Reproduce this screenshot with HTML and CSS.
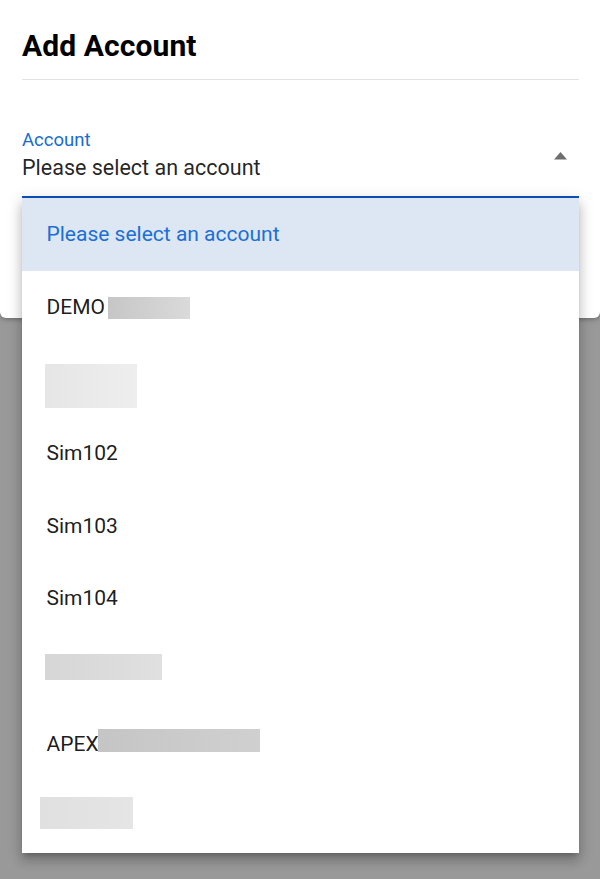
FILE: index.html
```html
<!DOCTYPE html>
<html lang="en">
<head>
<meta charset="utf-8">
<title>Add Account</title>
<link rel="stylesheet" href="styles.css">
</head>
<body>
<div class="page">
  <section class="dialog">
    <h1 class="title">Add Account</h1>
    <hr class="divider">
    <div class="field">
      <div class="field-text">
        <label class="field-label">Account</label>
        <div class="field-value">Please select an account</div>
      </div>
      <svg class="arrow" width="13" height="8" viewBox="0 0 13 8" aria-hidden="true"><polygon points="6.5,0 13,7.5 0,7.5" fill="#6e6e6e"/></svg>
    </div>
  </section>

  <ul class="menu">
    <li class="item selected">Please select an account</li>
    <li class="item">DEMO<span class="redact r-demo"></span></li>
    <li class="item top"><span class="redact r-two"></span></li>
    <li class="item">Sim102</li>
    <li class="item">Sim103</li>
    <li class="item">Sim104</li>
    <li class="item top"><span class="redact r-six"></span></li>
    <li class="item">APEX<span class="redact r-apex"></span></li>
    <li class="item top"><span class="redact r-eight"></span></li>
  </ul>
</div>
</body>
</html>
```

FILE: styles.css
```css
html, body {
  margin: 0;
  padding: 0;
}

body {
  background: #999999;
  font-family: Roboto, "Liberation Sans", Arial, sans-serif;
  color: rgba(0, 0, 0, 0.87);
}

.page {
  position: relative;
  width: 600px;
  height: 879px;
  overflow: hidden;
}

.dialog {
  background: #ffffff;
  height: 318px;
  box-sizing: border-box;
  padding: 28px 21px 0 22px;
  border-radius: 0 0 6px 6px;
  box-shadow: 0 2px 4px rgba(0, 0, 0, 0.25);
}

.title {
  margin: 0;
  font-size: 30px;
  line-height: 36px;
  font-weight: 700;
  color: #000000;
  letter-spacing: 0.1px;
}

.divider {
  margin: 15px 0 0;
  border: 0;
  height: 1px;
  background: #e2e2e2;
}

.field {
  margin-top: 49px;
  display: flex;
  align-items: center;
  padding-bottom: 15px;
  border-bottom: 3px solid #0e52be;
}

.field-text {
  flex: 1;
  display: flex;
  flex-direction: column;
  gap: 4px;
}

.field-label {
  font-size: 18.5px;
  line-height: 22px;
  color: #1a6cd0;
}

.field-value {
  font-size: 21.5px;
  line-height: 26px;
  color: rgba(0, 0, 0, 0.87);
}

.arrow {
  margin: 2px 12px 0 0;
  display: block;
}

.menu {
  position: absolute;
  top: 198px;
  left: 22px;
  width: 557px;
  margin: 0;
  padding: 0;
  list-style: none;
  background: #ffffff;
  box-shadow: 0 5px 5px -3px rgba(0, 0, 0, 0.2), 0 8px 10px 1px rgba(0, 0, 0, 0.14), 0 3px 14px 2px rgba(0, 0, 0, 0.12);
}

.item {
  height: 72.8px;
  box-sizing: border-box;
  padding: 0 0 0 24.5px;
  display: flex;
  align-items: center;
  font-size: 21px;
  line-height: 26px;
  color: rgba(0, 0, 0, 0.9);
}

.item.top {
  align-items: flex-start;
}

.item.selected {
  background: #dde7f3;
  color: #1b6fd6;
}

.redact {
  display: block;
  flex: none;
}

.r-demo {
  width: 82px;
  height: 22px;
  margin: 2px 0 0 3px;
  background: linear-gradient(90deg, #c6c6c6, #dadada);
}

.r-two {
  width: 92px;
  height: 44px;
  margin: 20px 0 0 -1.5px;
  background: linear-gradient(90deg, #e6e6e6, #eeeeee);
}

.r-six {
  width: 117px;
  height: 26px;
  margin: 19px 0 0 -1.5px;
  background: linear-gradient(90deg, #d6d6d6, #e0e0e0);
}

.r-apex {
  width: 162px;
  height: 23px;
  margin: -7px 0 0 -1px;
  background: linear-gradient(90deg, #c5c5c5, #d0d0d0);
}

.r-eight {
  width: 93px;
  height: 32px;
  margin: 17px 0 0 -7px;
  background: linear-gradient(90deg, #e0e0e0, #e5e5e5);
}
```
